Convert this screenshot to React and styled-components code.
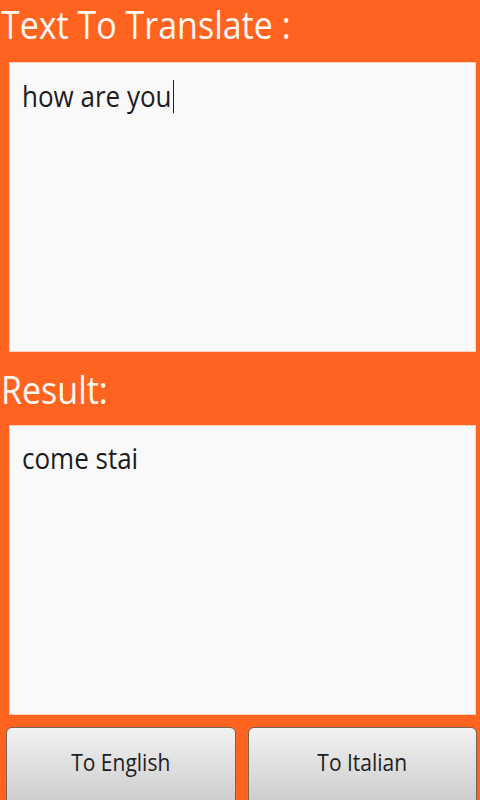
import React from "react";
import styled, { createGlobalStyle } from "styled-components";

const Global = createGlobalStyle`
	html, body {
		margin: 0;
		padding: 0;
		background: #fe6320;
	}
	* {
		box-sizing: border-box;
	}
`;

const Screen = styled.div`
	width: 480px;
	height: 800px;
	overflow: hidden;
	background: #fe6320;
	display: flex;
	flex-direction: column;
	font-family: "Open Sans", "Noto Sans", sans-serif;
	& > * {
		flex-shrink: 0;
	}
`;

const Label = styled.div`
	height: ${(p) => p.$h}px;
	padding: ${(p) => p.$top}px 0 0 1px;
	color: #fff7f0;
	font-size: 34px;
	line-height: 1;
	white-space: nowrap;
`;

// the screen is stretched a bit vertically, so the glyphs are too
const Stretch = styled.span`
	display: inline-block;
	transform: scaleY(1.11);
	transform-origin: left top;
`;

const Field = styled.div`
	height: ${(p) => p.$h}px;
	margin: 0 4px 0 9px;
	background: #f9f9f9;
	border: 1px solid #ffd2bc;
	padding: 17px 0 0 12px;
	color: #1c1c1c;
	font-size: 26px;
	line-height: 1;
	white-space: nowrap;
`;

const Caret = styled.span`
	display: inline-block;
	width: 1px;
	height: 30px;
	margin-left: 1px;
	vertical-align: -6px;
	background: #222;
`;

const ButtonRow = styled.div`
	display: flex;
	gap: 12px;
	padding: 12px 3px 0 6px;
`;

const Button = styled.button`
	flex: 1;
	height: 82px;
	border: 1px solid #7c6052;
	border-radius: 6px;
	background: linear-gradient(#f2f2f2 0%, #e2e2e2 40%, #c9c9c9 100%);
	color: #1e1e1e;
	font-family: inherit;
	font-size: 21px;
	padding: 0 0 14px;
	cursor: pointer;
`;

export default function App() {
	return (
		<>
			<Global />
			<Screen>
				<Label $h={62} $top={6}>
					<Stretch>Text To Translate :</Stretch>
				</Label>
				<Field $h={290}>
					<Stretch>
						how are you
						<Caret />
					</Stretch>
				</Field>
				<Label $h={73} $top={19}>
					<Stretch>Result:</Stretch>
				</Label>
				<Field $h={290}>
					<Stretch>come stai</Stretch>
				</Field>
				<ButtonRow>
					<Button>
						<Stretch>To English</Stretch>
					</Button>
					<Button>
						<Stretch>To Italian</Stretch>
					</Button>
				</ButtonRow>
			</Screen>
		</>
	);
}
